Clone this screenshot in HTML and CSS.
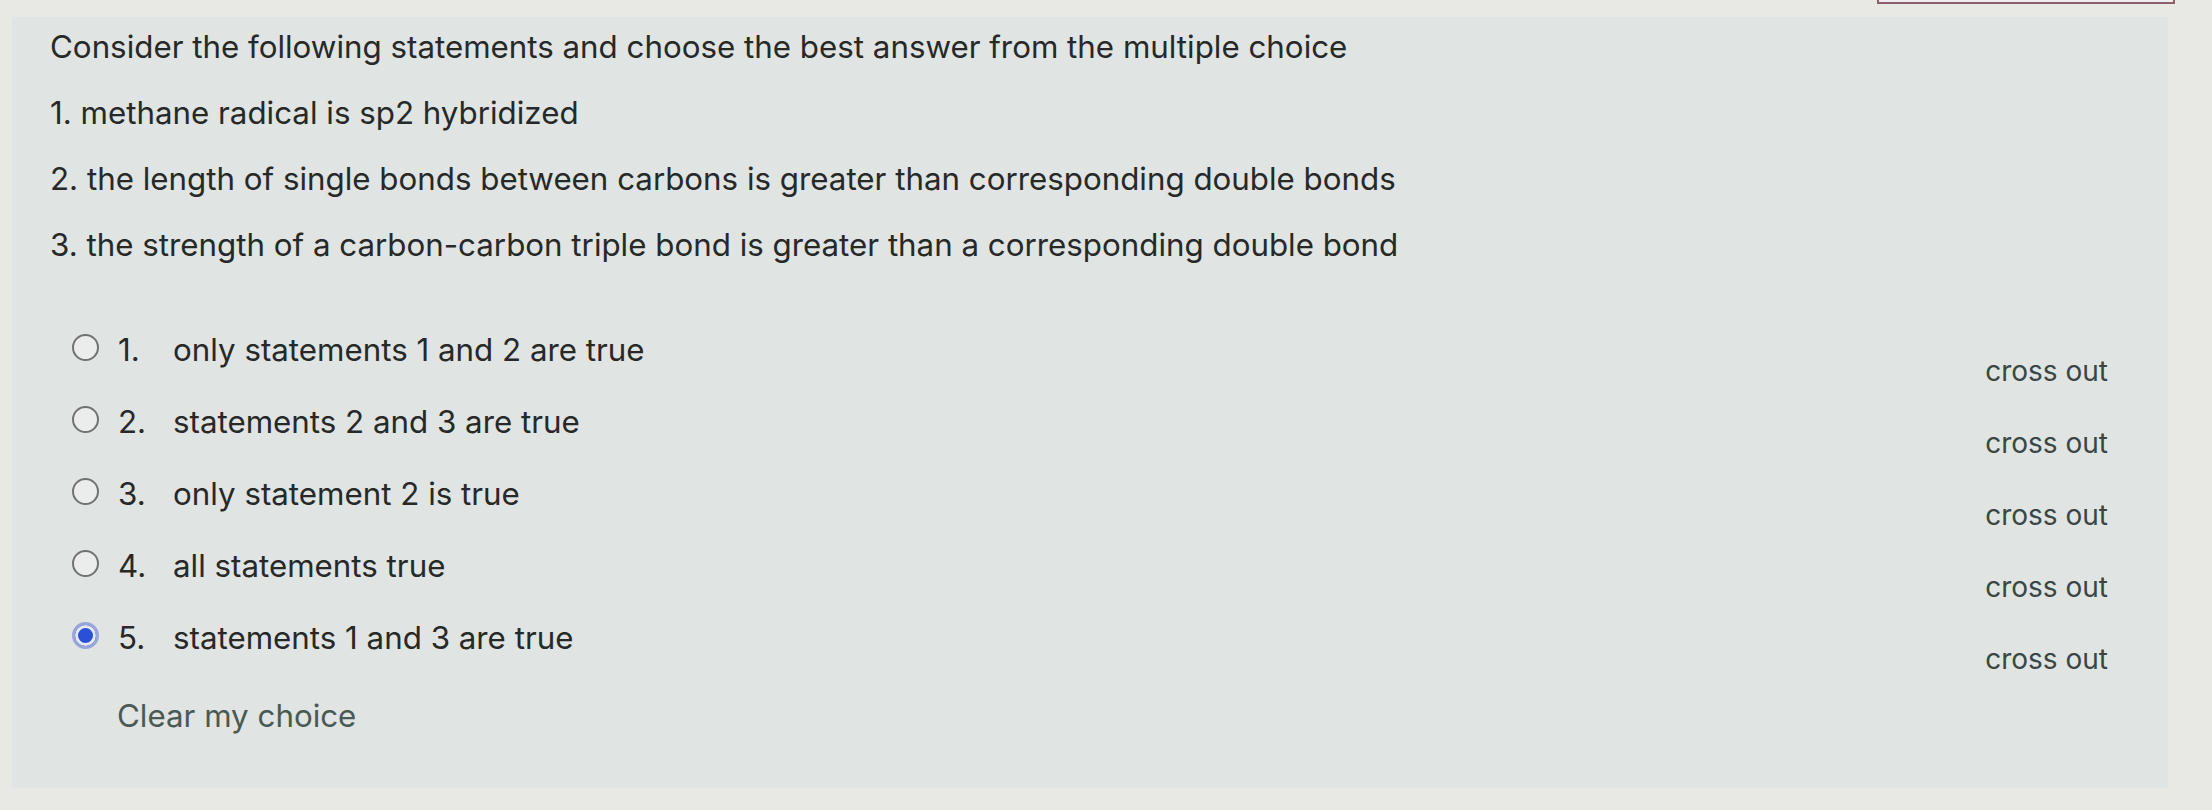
FILE: index.html
```html
<!DOCTYPE html>
<html lang="en">
<head>
<meta charset="utf-8">
<title>Multiple choice question</title>
<link rel="stylesheet" href="styles.css">
</head>
<body>
<div class="topbar"><div class="tab"></div></div>
<div class="panel">
  <div class="qtext">
    <p class="title">Consider the following statements and choose the best answer from the multiple choice</p>
    <div class="stmts">
      <p>1. methane radical is sp2 hybridized</p>
      <p>2. the length of single bonds between carbons is greater than corresponding double bonds</p>
      <p>3. the strength of a carbon-carbon triple bond is greater than a corresponding double bond</p>
    </div>
  </div>
  <div class="answers">
    <div class="opt">
      <span class="radio"></span>
      <span class="num">1.</span>
      <span class="label">only statements 1 and 2 are true</span>
      <span class="cross">cross out</span>
    </div>
    <div class="opt">
      <span class="radio"></span>
      <span class="num">2.</span>
      <span class="label">statements 2 and 3 are true</span>
      <span class="cross">cross out</span>
    </div>
    <div class="opt">
      <span class="radio"></span>
      <span class="num">3.</span>
      <span class="label">only statement 2 is true</span>
      <span class="cross">cross out</span>
    </div>
    <div class="opt">
      <span class="radio"></span>
      <span class="num">4.</span>
      <span class="label">all statements true</span>
      <span class="cross">cross out</span>
    </div>
    <div class="opt">
      <span class="radio checked"></span>
      <span class="num">5.</span>
      <span class="label">statements 1 and 3 are true</span>
      <span class="cross">cross out</span>
    </div>
    <div class="clear">Clear my choice</div>
  </div>
</div>
</body>
</html>
```

FILE: styles.css
```css
html, body {
  margin: 0;
  padding: 0;
}
body {
  width: 2212px;
  height: 810px;
  overflow: hidden;
  background: #e8e8e5;
  font-family: Inter, "Liberation Sans", Arial, sans-serif;
  color: #262928;
}
.topbar {
  height: 17px;
  display: flex;
  justify-content: flex-end;
  padding-right: 37px;
}
.tab {
  width: 294px;
  height: 2px;
  background: #efeded;
  border: 2px solid #8d5f6a;
  border-top: none;
}
.panel {
  margin: 0 44px 0 12px;
  height: 771px;
  background: #e0e4e2;
  padding: 5px 60px 0 38px;
  box-sizing: border-box;
}
.qtext p {
  margin: 0;
  font-size: 31.3px;
}
.title {
  line-height: 50px;
}
.stmts {
  margin-top: 8px;
}
.stmts p {
  line-height: 66px;
}
.answers {
  margin-top: 36px;
  padding-left: 22px;
}
.opt {
  display: flex;
  align-items: center;
  height: 72px;
  font-size: 31.3px;
  line-height: 72px;
}
.radio {
  width: 27px;
  height: 27px;
  box-sizing: border-box;
  border-radius: 50%;
  border: 2px solid #6e7270;
  background: #eaedeb;
  margin-right: 19px;
  margin-bottom: 6px;
  flex: none;
}
.radio.checked {
  border: 3px solid #9aa5d9;
  background: #2a50d8;
  box-shadow: inset 0 0 0 3px #e6e9f4;
}
.num {
  width: 55px;
  flex: none;
}
.label {
  flex: none;
}
.cross {
  margin-left: auto;
  align-self: flex-start;
  font-size: 28px;
  line-height: 30px;
  padding-top: 42px;
  color: #3a4643;
}
.clear {
  margin-top: 6px;
  margin-left: 45px;
  font-size: 31.3px;
  line-height: 72px;
  color: #4a5954;
}
```
